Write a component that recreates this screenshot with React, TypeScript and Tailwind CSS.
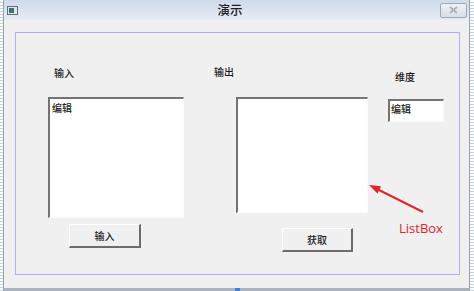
import React from 'react';

const cjk = { fontFamily: '"Noto Sans CJK SC", "Noto Sans", sans-serif' };

function Label({ text, className }: { text: string; className?: string }) {
  return (
    <div className={`h-[10px] text-[10px] leading-[10px] font-medium text-[#1c1c1c] ${className ?? ''}`}>{text}</div>
  );
}

function Button({ text, className }: { text: string; className?: string }) {
  return (
    <div
      className={`flex items-center justify-center bg-[#f0f0f0] border-t border-l border-t-[#ffffff] border-l-[#ffffff] border-r-2 border-b-2 border-r-[#6c6c6c] border-b-[#6c6c6c] text-[10px] leading-none font-medium text-[#1c1c1c] ${className ?? ''}`}
    >
      {text}
    </div>
  );
}

export default function App() {
  return (
    <div
      className="relative w-[474px] h-[291px] overflow-hidden bg-[repeating-linear-gradient(0deg,#c3d2e6_0px,#c3d2e6_1px,#ffffff_1px,#ffffff_3px)]"
      style={cjk}
    >
      {/* 窗口 */}
      <div className="ml-[3px] w-[467px] h-[291px] flex flex-col border-l border-r border-[#97a1ad] border-b-[3px] border-b-[#aab3be]">
        {/* 标题栏 */}
        <div className="h-[20px] flex items-center bg-gradient-to-b from-[#cfdbea] to-[#e6ecf4]">
          <div className="ml-[3px] w-[11px] h-[9px] border border-[#5f6f7e] bg-[#dfe7ee] flex items-center pl-[1px]">
            <div className="w-[5px] h-[5px] bg-[#3f7466]" />
          </div>
          <div className="flex-1 flex justify-center pl-[2px]">
            <span className="text-[12.5px] leading-none text-[#1e1e1e] font-medium">演示</span>
          </div>
          <div className="mr-[2px] w-[27px] h-[15px] rounded-[2px] border border-[#9ea8b4] bg-gradient-to-b from-[#eef2f7] to-[#d8dfe8] flex items-center justify-center">
            <svg width="9" height="8" viewBox="0 0 9 8">
              <path d="M1 1 L8 7 M8 1 L1 7" stroke="#7d8793" strokeWidth="1.6" fill="none" />
              <path d="M1 1 L8 7 M8 1 L1 7" stroke="#eef1f5" strokeWidth="0.5" fill="none" />
            </svg>
          </div>
        </div>

        {/* 客户区 */}
        <div className="flex-1 bg-[#f0f0f0] pt-[12px] pl-[11px]">
          <div className="w-[445px] h-[243px] border border-[#b1adf0] flex items-start">
            {/* 输入列 */}
            <div className="ml-[32px] w-[136px] flex flex-col">
              <Label text="输入" className="mt-[35px] pl-[6px]" />
              <div className="mt-[19px] w-[136px] h-[121px] bg-white border-t-2 border-l-2 border-t-[#737373] border-l-[#737373] border-r border-b border-r-[#fbfbfb] border-b-[#fbfbfb] pl-[2px] pt-[4px] text-[10px] leading-[10px] font-medium text-[#1c1c1c]">
                编辑
              </div>
              <Button text="输入" className="mt-[6px] ml-[21px] w-[72px] h-[24px]" />
            </div>

            {/* 输出列 */}
            <div className="ml-[30px] w-[154px] flex flex-col">
              <Label text="输出" className="mt-[34px]" />
              <div className="mt-[20px] ml-[22px] w-[132px] h-[116px] bg-white border-t-2 border-l-2 border-t-[#737373] border-l-[#737373] border-r border-b border-r-[#fbfbfb] border-b-[#fbfbfb]" />
              <Button text="获取" className="mt-[15px] ml-[68px] w-[71px] h-[24px]" />
            </div>

            {/* 维度列 */}
            <div className="ml-[20px] w-[56px] flex flex-col">
              <Label text="维度" className="mt-[39px] pl-[7px]" />
              <div className="mt-[17px] w-[56px] h-[23px] bg-white border-t-2 border-l-2 border-t-[#737373] border-l-[#737373] border-r border-b border-r-[#fbfbfb] border-b-[#fbfbfb] pl-[1px] pt-[3px] text-[10px] leading-[10px] font-medium text-[#1c1c1c]">
                编辑
              </div>
            </div>
          </div>
        </div>
      </div>

      {/* 设计器底部把手 */}
      <div className="absolute left-[235px] top-[288px] w-[5px] h-[3px] bg-[#3f7fd6]" />

      {/* 标注箭头 */}
      <svg className="absolute left-0 top-0" width="474" height="291" viewBox="0 0 474 291">
        <line x1="423" y1="212" x2="378" y2="189.5" stroke="#e5222c" strokeWidth="2" />
        <polygon points="369,185 381,186.2 377.4,193.4" fill="#e5222c" />
      </svg>
      <div
        className="absolute left-[399px] top-[222px] text-[13px] leading-none text-[#e8202c]"
        style={{ fontFamily: '"Open Sans", "Noto Sans", sans-serif' }}
      >
        ListBox
      </div>
    </div>
  );
}
